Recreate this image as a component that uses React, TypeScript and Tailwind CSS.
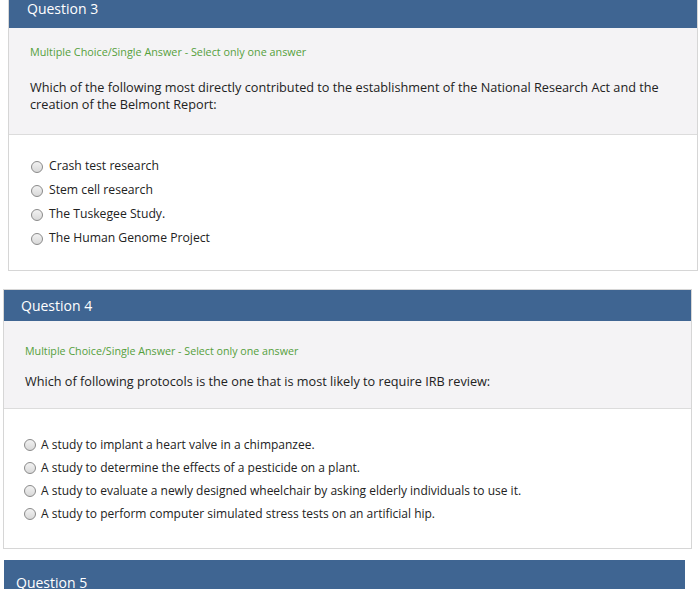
const font = { fontFamily: '"Open Sans", "Noto Sans", sans-serif' };

function Radio() {
  return (
    <span className="inline-block w-[12px] h-[12px] rounded-full border border-[#8a8a8a] bg-gradient-to-b from-[#f2f2f2] to-[#d9d9d9] shrink-0" />
  );
}

export default function App() {
  return (
    <div className="w-[700px] h-[589px] overflow-hidden bg-white text-[#222]" style={font}>
      {/* Question 3 */}
      <section className="ml-[8px] mr-[2px] border border-[#d6d6d6] -mt-[13px]">
        <div className="h-[40px] bg-[#3f6592] text-white text-[14px] flex items-center pl-[18px]">
          Question 3
        </div>
        <div className="bg-[#f4f3f5] border-b border-[#dcdcdc] pl-[21px] pr-[20px] pt-[16px] pb-[21px]">
          <p className="text-[10.8px] leading-[16px] text-[#55a03c]">Multiple Choice/Single Answer - Select only one answer</p>
          <p className="mt-[19px] text-[12.7px] leading-[17px]">
            Which of the following most directly contributed to the establishment of the National Research Act and the creation of the Belmont Report:
          </p>
        </div>
        <ul className="pl-[22px] pt-[23px] pb-[23px] flex flex-col gap-[7px] text-[12.2px]">
          {["Crash test research", "Stem cell research", "The Tuskegee Study.", "The Human Genome Project"].map((t) => (
            <li key={t} className="flex items-center gap-[6px] h-[17px]">
              <Radio />
              <span>{t}</span>
            </li>
          ))}
        </ul>
      </section>

      {/* Question 4 */}
      <section className="mt-[18px] ml-[3px] mr-[8px] border border-[#d6d6d6]">
        <div className="h-[31px] bg-[#3f6592] text-white text-[14px] flex items-center pl-[17px]">
          Question 4
        </div>
        <div className="bg-[#f4f3f5] border-b border-[#dcdcdc] pl-[21px] pr-[30px] pt-[22px] pb-[18px]">
          <p className="text-[10.7px] leading-[16px] text-[#55a03c]">Multiple Choice/Single Answer - Select only one answer</p>
          <p className="mt-[14px] text-[12.7px] leading-[17px]">
            Which of following protocols is the one that is most likely to require IRB review:
          </p>
        </div>
        <ul className="pl-[20px] pt-[27px] pb-[25px] flex flex-col gap-[6.3px] text-[12px]">
          {[
            "A study to implant a heart valve in a chimpanzee.",
            "A study to determine the effects of a pesticide on a plant.",
            "A study to evaluate a newly designed wheelchair by asking elderly individuals to use it.",
            "A study to perform computer simulated stress tests on an artificial hip.",
          ].map((t) => (
            <li key={t} className="flex items-center gap-[5px] h-[17px]">
              <Radio />
              <span>{t}</span>
            </li>
          ))}
        </ul>
      </section>

      {/* Question 5 */}
      <section className="mt-[11px] ml-[4px] mr-[15px]">
        <div className="h-[40px] bg-[#3f6592] text-white text-[14px] leading-[19px] pt-[13px] pl-[12px]">
          Question 5
        </div>
      </section>
    </div>
  );
}
